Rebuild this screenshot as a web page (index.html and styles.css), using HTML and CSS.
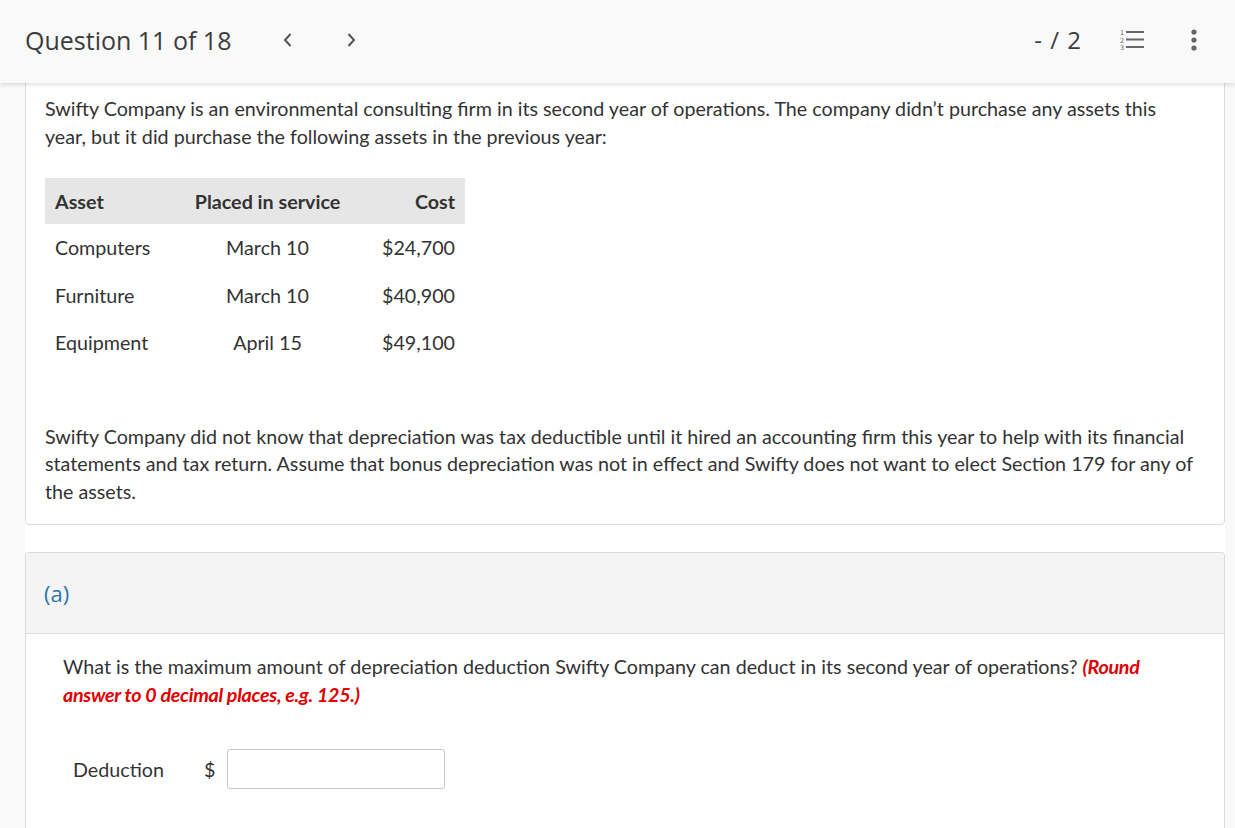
FILE: index.html
```html
<!DOCTYPE html>
<html>
<head>
<meta charset="utf-8">
<link rel="stylesheet" href="styles.css">
</head>
<body>
<header class="topbar">
  <div class="topbar-left">
    <span class="qtitle">Question 11 of 18</span>
    <span class="nav">
      <svg class="chev" width="12" height="18" viewBox="0 0 12 18"><path d="M8.5 3 L3 9 L8.5 15" fill="none" stroke="#555" stroke-width="2"/></svg>
    </span>
    <span class="nav">
      <svg class="chev" width="12" height="18" viewBox="0 0 12 18"><path d="M3.5 3 L9 9 L3.5 15" fill="none" stroke="#555" stroke-width="2"/></svg>
    </span>
  </div>
  <div class="topbar-right">
    <span class="score">- / 2</span>
    <svg class="listicon" width="26" height="22" viewBox="0 0 26 22">
      <text x="0" y="6" font-size="6.5" font-family="DejaVu Sans" fill="#666">1</text>
      <text x="0" y="13.5" font-size="6.5" font-family="DejaVu Sans" fill="#666">2</text>
      <text x="0" y="21" font-size="6.5" font-family="DejaVu Sans" fill="#666">3</text>
      <rect x="6" y="2" width="18" height="2" fill="#666"/>
      <rect x="6" y="9.5" width="18" height="2" fill="#666"/>
      <rect x="6" y="17" width="18" height="2" fill="#666"/>
    </svg>
    <svg class="kebab" width="8" height="24" viewBox="0 0 8 24">
      <circle cx="4" cy="4" r="2.6" fill="#666"/>
      <circle cx="4" cy="12" r="2.6" fill="#666"/>
      <circle cx="4" cy="20" r="2.6" fill="#666"/>
    </svg>
  </div>
</header>
<main class="main">
  <section class="card intro">
    <p class="para">Swifty Company is an environmental consulting firm in its second year of operations. The company didn’t purchase any assets this year, but it did purchase the following assets in the previous year:</p>
    <table class="assets">
      <thead>
        <tr><th class="c1">Asset</th><th class="c2">Placed in service</th><th class="c3">Cost</th></tr>
      </thead>
      <tbody>
        <tr><td class="c1">Computers</td><td class="c2">March 10</td><td class="c3">$24,700</td></tr>
        <tr><td class="c1">Furniture</td><td class="c2">March 10</td><td class="c3">$40,900</td></tr>
        <tr><td class="c1">Equipment</td><td class="c2">April 15</td><td class="c3">$49,100</td></tr>
      </tbody>
    </table>
    <p class="para para2">Swifty Company did not know that depreciation was tax deductible until it hired an accounting firm this year to help with its financial statements and tax return. Assume that bonus depreciation was not in effect and Swifty does not want to elect Section 179 for any of the assets.</p>
  </section>
  <section class="card part">
    <div class="part-head">(a)</div>
    <div class="part-body">
      <p class="question">What is the maximum amount of depreciation deduction Swifty Company can deduct in its second year of operations? <em class="hint">(Round answer to 0 decimal places, e.g. 125.)</em></p>
      <div class="answer-row">
        <span class="label">Deduction</span>
        <span class="dollar">$</span>
        <input class="field" type="text">
      </div>
    </div>
  </section>
</main>
</body>
</html>
```
FILE: styles.css
```css
html, body {
  margin: 0;
  padding: 0;
  background: #f9f9f9;
  height: 100%;
  overflow: hidden;
}
body {
  font-family: Lato, "Liberation Sans", sans-serif;
  color: #333;
}
.topbar {
  position: relative;
  z-index: 2;
  height: 83px;
  background: #f9f9f9;
  box-shadow: 0 2px 4px rgba(0,0,0,0.12);
  display: flex;
  align-items: center;
  justify-content: space-between;
  padding: 0 25px;
  box-sizing: border-box;
}
.topbar-left {
  display: flex;
  align-items: center;
}
.qtitle {
  font-family: "Open Sans", sans-serif;
  font-size: 25px;
  color: #3c3c3c;
  margin-top: -4px;
}
.nav {
  display: inline-flex;
  margin-top: -4px;
  margin-left: 51px;
}
.topbar-right {
  display: flex;
  align-items: center;
  margin-top: -4px;
}
.score {
  font-family: "Open Sans", sans-serif;
  font-size: 24px;
  color: #3c3c3c;
  letter-spacing: 1px;
}
.listicon { margin-left: 38px; }
.kebab { margin-left: 44px; margin-right: 12px; }
.main {
  margin: -14px 10px 0 25px;
  background: #fff;
  height: calc(100% - 69px);
  overflow: hidden;
}
.card {
  border: 1px solid #dcdcdc;
  border-radius: 4px;
  background: #fff;
}
.intro {
  padding: 25px 30px 19px 19px;
  border-top-left-radius: 0;
  border-top-right-radius: 0;
}
.para {
  margin: 0;
  font-size: 19.7px;
  line-height: 27.5px;
}
.assets {
  margin-top: 28px;
  border-collapse: collapse;
  font-size: 19.7px;
}
.assets th {
  background: #e6e6e6;
  font-weight: bold;
  height: 46px;
  padding: 0 10px;
}
.assets td {
  height: 47.5px;
  padding: 0 10px;
}
.c1 { width: 110px; text-align: left; }
.c2 { width: 165px; text-align: center; }
.c3 { width: 85px; text-align: right; }
.para2 { margin-top: 56px; }
.part {
  margin-top: 27px;
  min-height: 290px;
  border-bottom: none;
  border-bottom-left-radius: 0;
  border-bottom-right-radius: 0;
}
.part-head {
  background: #f4f4f4;
  height: 80px;
  border-bottom: 1px solid #dcdcdc;
  display: flex;
  align-items: center;
  padding-left: 18px;
  font-family: "Open Sans", sans-serif;
  font-size: 22px;
  color: #2b78ab;
  border-top-left-radius: 4px;
  border-top-right-radius: 4px;
}
.part-body {
  padding: 19px 32px 0 37px;
}
.question {
  margin: 0;
  font-size: 19.7px;
  line-height: 28px;
}
.hint {
  color: #e10000;
  font-weight: bold;
  font-style: italic;
  letter-spacing: -0.3px;
}
.answer-row {
  display: flex;
  align-items: center;
  margin-top: 40px;
  padding-left: 10px;
}
.label {
  font-size: 19.7px;
}
.dollar {
  font-size: 19.7px;
  margin-left: 40px;
  margin-right: 12px;
}
.field {
  width: 218px;
  height: 40px;
  box-sizing: border-box;
  border: 1px solid #c8c8c8;
  border-radius: 3px;
  background: #fff;
}
```
